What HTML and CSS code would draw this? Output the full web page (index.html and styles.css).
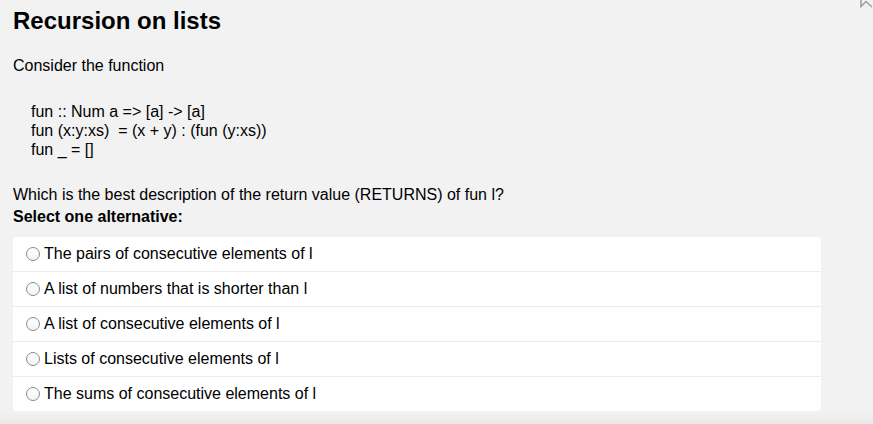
FILE: index.html
```html
<!DOCTYPE html>
<html>

<head>
    <title>Recursion on lists</title>
    <link rel="stylesheet" href="styles.css">
</head>

<body>
    <div class="page">
        <h1 class="title">Recursion on lists</h1>
        <p class="intro">Consider the function</p>
        <div class="code">
            <div>fun :: Num a =&gt; [a] -&gt; [a]</div>
            <div>fun (x:y:xs) &nbsp;= (x + y) : (fun (y:xs))</div>
            <div>fun _ = []</div>
        </div>
        <p class="question">Which is the best description of the return value (RETURNS) of fun l?</p>
        <p class="select">Select one alternative:</p>
        <div class="answers">
            <label class="answer"><input type="radio" name="ans"> The pairs of consecutive elements of l</label>
            <label class="answer"><input type="radio" name="ans"> A list of numbers that is shorter than l</label>
            <label class="answer"><input type="radio" name="ans"> A list of consecutive elements of l</label>
            <label class="answer"><input type="radio" name="ans"> Lists of consecutive elements of l</label>
            <label class="answer"><input type="radio" name="ans"> The sums of consecutive elements of l</label>
        </div>
    </div>
    <svg class="corner" width="14" height="8" viewBox="0 0 14 8">
        <polyline points="2,0 2,6.5 7,1.5 13,7" fill="none" stroke="#a0a0a0" stroke-width="1.6" />
    </svg>
    <div class="fade"></div>
</body>

</html>
```

FILE: styles.css
```css
html,
body {
    margin: 0;
    height: 100%;
}

body {
    background-color: #f2f2f2;
    font-family: "Liberation Sans", Arial, sans-serif;
    color: #000;
    overflow: hidden;
}

.page {
    padding: 7px 52px 0 13px;
}

.title {
    font-size: 24px;
    line-height: 28px;
    font-weight: bold;
    margin: 0;
}

.intro {
    font-size: 16px;
    line-height: 18px;
    margin: 22px 0 0 0;
}

.code {
    font-size: 16px;
    line-height: 19px;
    margin-top: 27px;
    padding-left: 18px;
}

.question {
    font-size: 16px;
    line-height: 18px;
    margin: 27px 0 0 0;
}

.select {
    font-size: 16px;
    line-height: 18px;
    font-weight: bold;
    margin: 4px 0 0 0;
}

.answers {
    margin-top: 11px;
    background-color: #fff;
    border-radius: 4px;
}

.answer {
    display: flex;
    align-items: center;
    padding-left: 13px;
    padding-bottom: 1px;
    box-sizing: border-box;
    height: 35px;
    font-size: 16px;
    border-top: 1px solid #ebebeb;
}

.answer:first-child {
    border-top: none;
    height: 34px;
}

.answer input {
    appearance: none;
    -webkit-appearance: none;
    flex-shrink: 0;
    width: 14px;
    height: 14px;
    margin: 1px 4px 0 0;
    border: 1px solid #8c8c8c;
    border-radius: 50%;
    background: linear-gradient(#fff, #f4f4f4);
    box-sizing: border-box;
}

.corner {
    position: fixed;
    top: 0;
    right: 0;
}

.fade {
    position: fixed;
    left: 0;
    right: 0;
    bottom: 0;
    height: 12px;
    background: linear-gradient(rgba(0, 0, 0, 0), rgba(0, 0, 0, 0.035));
}
```
